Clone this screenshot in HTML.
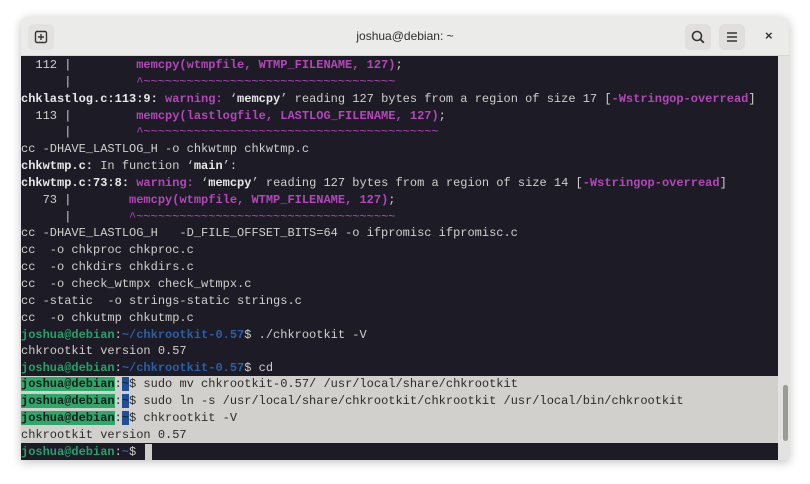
<!DOCTYPE html>
<html><head><meta charset="utf-8"><style>
html,body{margin:0;padding:0;background:#fff;width:810px;height:484px;overflow:hidden}
.win{position:absolute;left:21px;top:17px;width:768px;height:443px;border-radius:8px 8px 0 0;background:#ebebea;box-shadow:0 2px 10px rgba(0,0,0,.25);overflow:hidden}
.hdr{position:absolute;left:0;top:0;width:768px;height:38px;background:#ebebea;border-bottom:1px solid #d6d5d3}
.title{position:absolute;left:0;right:0;top:12px;text-align:center;font:12px "Liberation Sans",sans-serif;color:#2e2e2e}
.btn{position:absolute;top:7px;width:26px;height:26px;border-radius:5px;background:#e0dfdd}
.term{position:absolute;left:0;top:39px;width:757px;height:404px;background:#1c1b26}
.sb{position:absolute;left:757px;top:39px;width:11px;height:404px;background:#e3e2e0}
.thumb{position:absolute;left:762px;top:368px;width:5px;height:56px;border-radius:3px;background:#9a9a98}
pre{margin:0;position:absolute;left:0;top:1px;font:12px/16.85px "Liberation Mono",monospace;color:#d0cfcc;white-space:pre}
.m{color:#b546b9;font-weight:bold}.mn{color:#b546b9}
b{color:#e8e8e8}
.g{color:#26a269;font-weight:bold}.bl{color:#2a5fa8;font-weight:bold}
.sel{position:absolute;left:0;top:320px;width:757px;height:67px;background:#d1d0cc}
.sel pre{top:0;color:#2b2b2b}
.gs{background:#2ea86a;color:#1a1a1a;font-weight:bold}.bs{background:#1f4f96;color:#1a1a1a}
.cur{position:absolute;left:124px;top:388px;width:7px;height:16px;background:#d0cfcc}
</style></head><body>
<div class="win">
<div class="hdr">
<div class="btn" style="left:7px;background:#e3e2e0"><svg width="26" height="26"><rect x="7.5" y="7.5" width="11" height="11" rx="1.5" fill="none" stroke="#333" stroke-width="1.4"/><path d="M13 10v6M10 13h6" stroke="#333" stroke-width="1.4"/></svg></div>
<div class="title">joshua@debian: ~</div>
<div class="btn" style="left:664px"><svg width="26" height="26"><circle cx="12" cy="12" r="4.5" fill="none" stroke="#333" stroke-width="1.6"/><path d="M15.3 15.3l3.5 3.5" stroke="#333" stroke-width="1.8"/></svg></div>
<div class="btn" style="left:698px"><svg width="26" height="26"><path d="M8 9h10M8 13h10M8 17h10" stroke="#333" stroke-width="1.6"/></svg></div>
<div style="position:absolute;left:744px;top:11px;font:bold 13px 'Liberation Sans',sans-serif;color:#333">×</div>
</div>
<div class="term">
<pre>  112 |         <span class="m">memcpy(wtmpfile, WTMP_FILENAME, 127)</span>;
      |         <span class="mn">^~~~~~~~~~~~~~~~~~~~~~~~~~~~~~~~~~~~</span>
<b>chklastlog.c:113:9:</b> <span class="m">warning:</span> ‘<b>memcpy</b>’ reading 127 bytes from a region of size 17 [<span class="m">-Wstringop-overread</span>]
  113 |         <span class="m">memcpy(lastlogfile, LASTLOG_FILENAME, 127)</span>;
      |         <span class="mn">^~~~~~~~~~~~~~~~~~~~~~~~~~~~~~~~~~~~~~~~~~</span>
cc -DHAVE_LASTLOG_H -o chkwtmp chkwtmp.c
<b>chkwtmp.c:</b> In function ‘<b>main</b>’:
<b>chkwtmp.c:73:8:</b> <span class="m">warning:</span> ‘<b>memcpy</b>’ reading 127 bytes from a region of size 14 [<span class="m">-Wstringop-overread</span>]
   73 |        <span class="m">memcpy(wtmpfile, WTMP_FILENAME, 127)</span>;
      |        <span class="mn">^~~~~~~~~~~~~~~~~~~~~~~~~~~~~~~~~~~~~</span>
cc -DHAVE_LASTLOG_H   -D_FILE_OFFSET_BITS=64 -o ifpromisc ifpromisc.c
cc  -o chkproc chkproc.c
cc  -o chkdirs chkdirs.c
cc  -o check_wtmpx check_wtmpx.c
cc -static  -o strings-static strings.c
cc  -o chkutmp chkutmp.c
<span class="g">joshua@debian</span>:<span class="bl">~/chkrootkit-0.57</span>$ ./chkrootkit -V
chkrootkit version 0.57
<span class="g">joshua@debian</span>:<span class="bl">~/chkrootkit-0.57</span>$ cd</pre>
<div class="sel"><pre><span class="gs">joshua@debian</span>:<span class="bs">~</span>$ sudo mv chkrootkit-0.57/ /usr/local/share/chkrootkit
<span class="gs">joshua@debian</span>:<span class="bs">~</span>$ sudo ln -s /usr/local/share/chkrootkit/chkrootkit /usr/local/bin/chkrootkit
<span class="gs">joshua@debian</span>:<span class="bs">~</span>$ chkrootkit -V
chkrootkit version 0.57</pre></div>
<pre style="top:388px"><span class="g">joshua@debian</span>:<span class="bl">~</span>$ </pre>
<div class="cur"></div>
</div>
<div class="sb"></div><div class="thumb"></div>
</div>
</body></html>
